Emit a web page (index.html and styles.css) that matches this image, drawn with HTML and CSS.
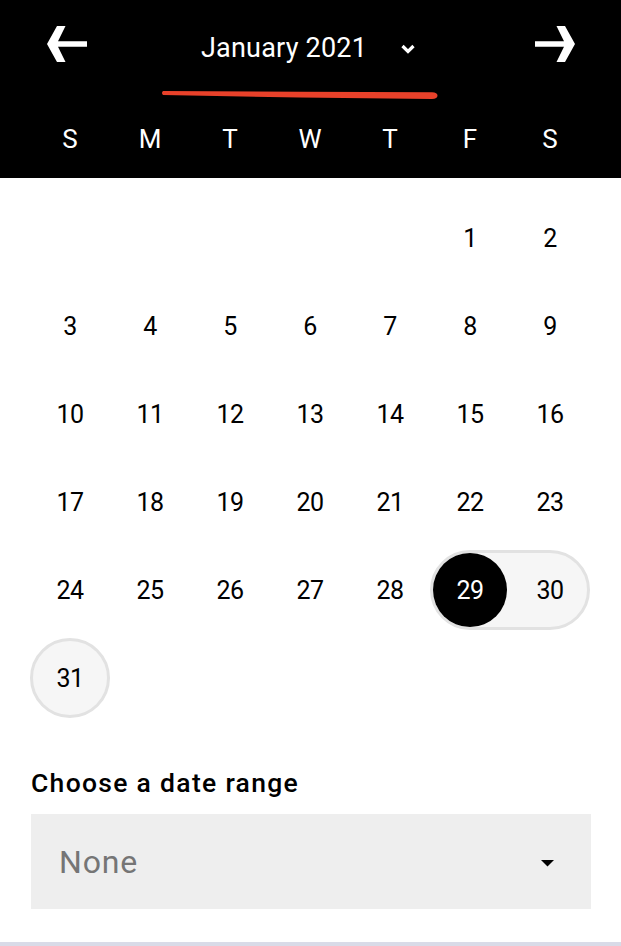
FILE: index.html
```html
<!DOCTYPE html>
<html lang="en">
<head>
<meta charset="utf-8">
<title>Date picker</title>
<link rel="stylesheet" href="styles.css">
</head>
<body>
<div class="picker">
  <header class="header">
    <div class="nav">
      <button class="nav-btn" aria-label="Previous month">
        <svg width="40" height="36" viewBox="0 0 40 36"><polygon points="0,18 10,0 18.5,0 11,15.3 40,15.3 40,20.7 11,20.7 18.5,36 10,36" fill="#fff"/></svg>
      </button>
      <div class="month">
        <span class="month-label">January 2021</span>
        <svg class="chevron" width="14" height="10" viewBox="0 0 14 10"><polyline points="1.5,2 7,7.5 12.5,2" fill="none" stroke="#fff" stroke-width="3.2"/></svg>
      </div>
      <button class="nav-btn" aria-label="Next month">
        <svg width="40" height="36" viewBox="0 0 40 36"><polygon points="40,18 30,0 21.5,0 29,15.3 0,15.3 0,20.7 29,20.7 21.5,36 30,36" fill="#fff"/></svg>
      </button>
    </div>
    <svg class="underline" width="621" height="14" viewBox="0 0 621 14"><path d="M163,3 L300,3.8 L432,4.2 Q437.5,4.3 437.5,7.6 Q437.5,11 432,11 L300,9.6 L163,7 Q161,5 163,3 Z" fill="#e8412a"/></svg>
    <div class="weekdays">
      <span>S</span><span>M</span><span>T</span><span>W</span><span>T</span><span>F</span><span>S</span>
    </div>
  </header>

  <div class="days">
    <span class="day blank"></span><span class="day blank"></span><span class="day blank"></span><span class="day blank"></span><span class="day blank"></span>
    <span class="day">1</span><span class="day">2</span>
    <span class="day">3</span><span class="day">4</span><span class="day">5</span><span class="day">6</span><span class="day">7</span><span class="day">8</span><span class="day">9</span>
    <span class="day">10</span><span class="day">11</span><span class="day">12</span><span class="day">13</span><span class="day">14</span><span class="day">15</span><span class="day">16</span>
    <span class="day">17</span><span class="day">18</span><span class="day">19</span><span class="day">20</span><span class="day">21</span><span class="day">22</span><span class="day">23</span>
    <span class="day">24</span><span class="day">25</span><span class="day">26</span><span class="day">27</span><span class="day">28</span>
    <div class="range">
      <span class="range-day selected">29</span>
      <span class="range-day end">30</span>
    </div>
    <span class="day single">31</span>
  </div>

  <section class="range-select">
    <label class="range-title">Choose a date range</label>
    <div class="select">
      <span class="select-value">None</span>
      <svg class="caret" width="13" height="7" viewBox="0 0 13 7"><polygon points="0,0 13,0 6.5,6.5" fill="#000"/></svg>
    </div>
  </section>
  <div class="footer-band"></div>
</div>
</body>
</html>
```

FILE: styles.css
```css
* { box-sizing: border-box; }

html, body {
  margin: 0;
  padding: 0;
  background: #fff;
}

body {
  font-family: Roboto, "Liberation Sans", Arial, sans-serif;
  color: #000;
  width: 621px;
  overflow: hidden;
}

.picker {
  width: 621px;
}

.header {
  background: #000;
  height: 178px;
  color: #fff;
}

.nav {
  display: flex;
  align-items: flex-start;
  justify-content: space-between;
  padding: 26px 46px 0 47px;
  height: 62px;
}

.nav-btn {
  display: block;
  border: 0;
  padding: 0;
  margin: 0;
  background: none;
  width: 40px;
  height: 36px;
}

.nav-btn svg { display: block; }

.month {
  display: flex;
  align-items: flex-start;
  gap: 34px;
  margin-top: 4px;
  margin-left: -6px;
}

.month-label {
  font-size: 27px;
  line-height: 36px;
  letter-spacing: 0.2px;
}

.chevron {
  display: block;
  margin-top: 14px;
}

.underline {
  display: block;
  margin-top: 26px;
}

.weekdays {
  display: grid;
  grid-template-columns: repeat(7, 80px);
  padding: 0 30px;
  margin-top: 22px;
  font-size: 26px;
  line-height: 30px;
  text-align: center;
}

.days {
  display: grid;
  grid-template-columns: repeat(7, 80px);
  grid-auto-rows: 80px;
  row-gap: 8px;
  padding: 20px 30px 0;
}

.day {
  display: flex;
  align-items: center;
  justify-content: center;
  font-size: 25px;
  letter-spacing: -0.5px;
}

.day.single {
  border: 3px solid #e2e2e2;
  background: #f6f6f6;
  border-radius: 50%;
}

.range {
  grid-column: 6 / span 2;
  display: grid;
  grid-template-columns: 74px 1fr;
  border: 3px solid #e2e2e2;
  background: #f6f6f6;
  border-radius: 40px;
}

.range-day {
  display: flex;
  align-items: center;
  justify-content: center;
  font-size: 25px;
  letter-spacing: -0.5px;
}

.range-day.end {
  padding-left: 6px;
}

.range-day.selected {
  background: #000;
  color: #fff;
  border-radius: 50%;
}

.range-select {
  padding: 0 30px 0 31px;
  margin-top: 50px;
}

.range-title {
  display: block;
  font-size: 26.5px;
  font-weight: 500;
  line-height: 30px;
  letter-spacing: 1.3px;
}

.select {
  margin-top: 16px;
  height: 95px;
  background: #eeeeee;
  display: flex;
  align-items: center;
  justify-content: space-between;
  padding: 0 37px 0 28px;
}

.select-value {
  font-size: 32px;
  color: #757575;
  letter-spacing: 0.8px;
}

.caret {
  display: block;
  margin-top: 3px;
}

.footer-band {
  margin-top: 33px;
  height: 10px;
  background: #d9dbe8;
}
```
